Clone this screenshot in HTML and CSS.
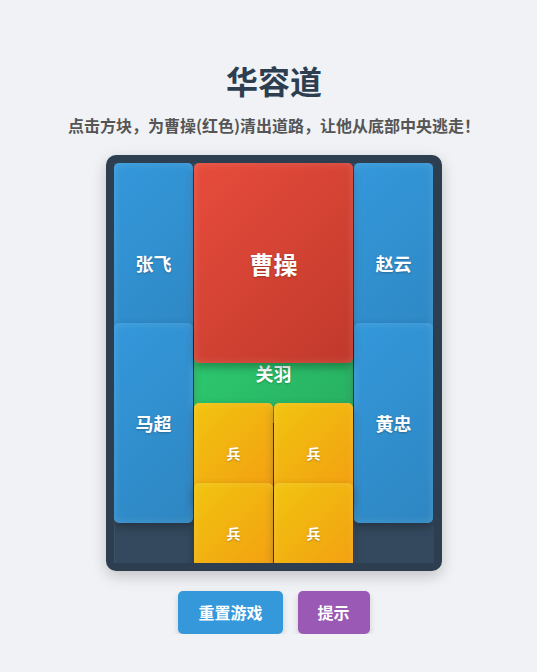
FILE: index.html
```html
<!DOCTYPE html>
<html lang="zh-CN">
<head>
    <meta charset="UTF-8">
    <title>华容道</title>
    <link rel="stylesheet" href="styles.css">
</head>
<body>

<div class="game">
    <h1 class="title">华容道</h1>
    <p class="tip">点击方块，为曹操(红色)清出道路，让他从底部中央逃走！</p>

    <div class="board">
        <div class="grid" id="grid"></div>
    </div>

    <div class="actions">
        <button class="btn reset" onclick="resetGame()">重置游戏</button>
        <button class="btn hint" onclick="showHint()">提示</button>
    </div>
</div>

<script>
    const CELL = 80;
    const pieces = [
        { name: '张飞', x: 0, y: 0, w: 1, h: 2, type: 'general' },
        { name: '赵云', x: 3, y: 0, w: 1, h: 2, type: 'general' },
        { name: '关羽', x: 1, y: 2, w: 2, h: 1, type: 'guanyu' },
        { name: '曹操', x: 1, y: 0, w: 2, h: 2, type: 'caocao' },
        { name: '马超', x: 0, y: 2, w: 1, h: 2, type: 'general' },
        { name: '黄忠', x: 3, y: 2, w: 1, h: 2, type: 'general' },
        { name: '兵', x: 1, y: 3, w: 1, h: 1, type: 'soldier' },
        { name: '兵', x: 2, y: 3, w: 1, h: 1, type: 'soldier' },
        { name: '兵', x: 1, y: 4, w: 1, h: 1, type: 'soldier' },
        { name: '兵', x: 2, y: 4, w: 1, h: 1, type: 'soldier' }
    ];

    const grid = document.getElementById('grid');

    function render() {
        grid.innerHTML = '';
        for (let i = 0; i < 20; i++) {
            const cell = document.createElement('div');
            cell.className = 'cell';
            grid.appendChild(cell);
        }
        pieces.forEach(function (p) {
            const el = document.createElement('div');
            el.className = 'piece ' + p.type;
            el.textContent = p.name;
            el.style.left = (p.x * CELL) + 'px';
            el.style.top = (p.y * CELL) + 'px';
            el.style.width = (p.w * CELL - 1) + 'px';
            el.style.height = (p.h * 100) + 'px';
            grid.appendChild(el);
        });
    }

    function resetGame() {
        render();
    }

    function showHint() {
        alert('先移动下方的兵，为关羽让路。');
    }

    render();
</script>

</body>
</html>
```

FILE: styles.css
```css
* {
    box-sizing: border-box;
}

body {
    margin: 0;
    font-family: "Noto Sans CJK SC", "Noto Sans", sans-serif;
    background: #f0f2f5;
}

.game {
    display: flex;
    flex-direction: column;
    align-items: center;
    padding: 60px 0 0 11px;
}

.title {
    margin: 0;
    font-size: 32px;
    line-height: 40px;
    font-weight: 700;
    color: #2c3e50;
}

.tip {
    margin: 13px 0 0;
    font-size: 16px;
    line-height: 24px;
    font-weight: 700;
    color: #555;
}

.board {
    margin-top: 18px;
    padding: 8px;
    background: #2c3e50;
    border-radius: 10px;
    box-shadow: 0 5px 15px rgba(0, 0, 0, 0.2);
}

.grid {
    position: relative;
    width: 320px;
    height: 400px;
    display: grid;
    grid-template-columns: repeat(4, 80px);
    grid-template-rows: repeat(5, 80px);
    background: #34495e;
    overflow: hidden;
}

.cell {
    border-left: 1px solid rgba(255, 255, 255, 0.06);
}

.piece {
    position: absolute;
    display: flex;
    align-items: center;
    justify-content: center;
    border-radius: 5px;
    color: #fff;
    font-weight: 700;
    font-size: 18px;
    text-shadow: 0 1px 2px rgba(0, 0, 0, 0.25);
    box-shadow: 0 4px 8px rgba(0, 0, 0, 0.3), inset 0 0 8px rgba(255, 255, 255, 0.15);
    cursor: pointer;
}

.general { background: linear-gradient(135deg, #3498db, #2e86c1); }
.caocao { background: linear-gradient(135deg, #e74c3c, #c0392b); font-size: 24px; z-index: 1; }
.guanyu { background: linear-gradient(135deg, #2ecc71, #27ae60); }
.soldier { background: linear-gradient(135deg, #f1c40f, #f39c12); font-size: 14px; }

.actions {
    display: flex;
    gap: 15px;
    margin-top: 20px;
}

.btn {
    padding: 10px 20px;
    font-family: inherit;
    font-size: 16px;
    line-height: 23px;
    font-weight: 700;
    color: #fff;
    border: none;
    border-radius: 5px;
    cursor: pointer;
    box-shadow: 0 3px 6px rgba(0, 0, 0, 0.15);
}

.reset { background: #3498db; }
.hint { background: #9b59b6; }
```
